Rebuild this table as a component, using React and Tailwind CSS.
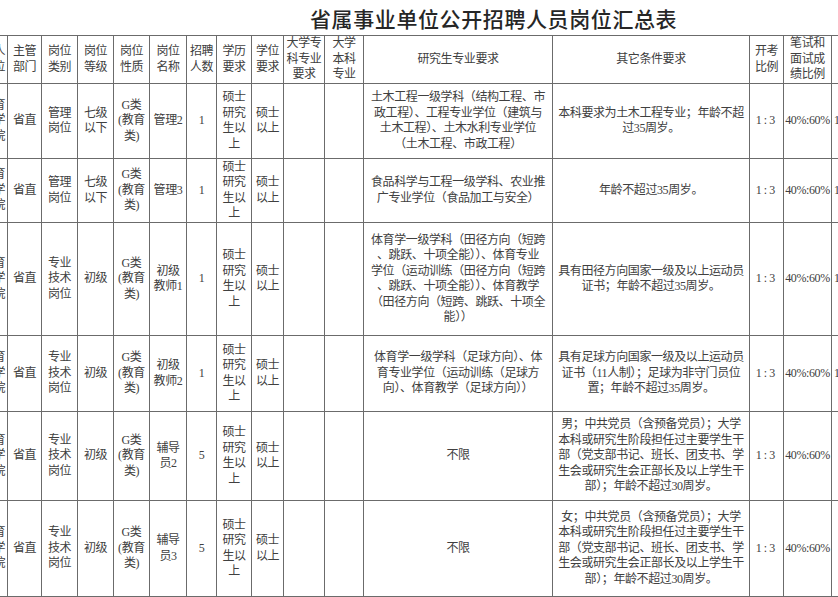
const HEAD = [
  '用人|单位', '主管|部门', '岗位|类别', '岗位|等级', '岗位|性质', '岗位|名称', '招聘|人数',
  '学历|要求', '学位|要求', '大学专|科专业|要求', '大学|本科|专业', '研究生专业要求',
  '其它条件要求', '开考|比例', '笔试和|面试成|绩比例', '备注',
]

const ROWS = [
  {
    h: 'h-[75px]',
    cells: ['省体育|职业学|院', '省直', '管理|岗位', '七级|以下', 'G类|(教育|类)', '管理2', '1', '硕士|研究|生以|上', '硕士|以上', '', '',
      '土木工程一级学科（结构工程、市|政工程）、工程专业学位（建筑与|土木工程）、土木水利专业学位|（土木工程、市政工程）',
      '本科要求为土木工程专业；年龄不超|过35周岁。', '1:3', '40%:60%', '1'],
  },
  {
    h: 'h-[64px]',
    cells: ['省体育|职业学|院', '省直', '管理|岗位', '七级|以下', 'G类|(教育|类)', '管理3', '1', '硕士|研究|生以|上', '硕士|以上', '', '',
      '食品科学与工程一级学科、农业推|广专业学位（食品加工与安全）',
      '年龄不超过35周岁。', '1:3', '40%:60%', '1'],
  },
  {
    h: 'h-[113px]',
    cells: ['省体育|职业学|院', '省直', '专业|技术|岗位', '初级', 'G类|(教育|类)', '初级|教师1', '1', '硕士|研究|生以|上', '硕士|以上', '', '',
      '体育学一级学科（田径方向（短跨|、跳跃、十项全能））、体育专业|学位（运动训练（田径方向（短跨|、跳跃、十项全能））、体育教学|（田径方向（短跨、跳跃、十项全|能））',
      '具有田径方向国家一级及以上运动员|证书；年龄不超过35周岁。', '1:3', '40%:60%', '1'],
  },
  {
    h: 'h-[76px]',
    cells: ['省体育|职业学|院', '省直', '专业|技术|岗位', '初级', 'G类|(教育|类)', '初级|教师2', '1', '硕士|研究|生以|上', '硕士|以上', '', '',
      '体育学一级学科（足球方向）、体|育专业学位（运动训练（足球方|向）、体育教学（足球方向））',
      '具有足球方向国家一级及以上运动员|证书（11人制）；足球为非守门员位|置；年龄不超过35周岁。', '1:3', '40%:60%', '1'],
  },
  {
    h: 'h-[89px]',
    cells: ['省体育|职业学|院', '省直', '专业|技术|岗位', '初级', 'G类|(教育|类)', '辅导|员2', '5', '硕士|研究|生以|上', '硕士|以上', '', '',
      '不限',
      '男；中共党员（含预备党员）；大学|本科或研究生阶段担任过主要学生干|部（党支部书记、班长、团支书、学|生会或研究生会正部长及以上学生干|部）；年龄不超过30周岁。', '1:3', '40%:60%', ''],
  },
  {
    h: 'h-[96px]',
    cells: ['省体育|职业学|院', '省直', '专业|技术|岗位', '初级', 'G类|(教育|类)', '辅导|员3', '5', '硕士|研究|生以|上', '硕士|以上', '', '',
      '不限',
      '女；中共党员（含预备党员）；大学|本科或研究生阶段担任过主要学生干|部（党支部书记、班长、团支书、学|生会或研究生会正部长及以上学生干|部）；年龄不超过30周岁。', '1:3', '40%:60%', ''],
  },
]

const COLS = [
  'w-[40px]', 'w-[34px]', 'w-[36px]', 'w-[36px]', 'w-[36px]', 'w-[37px]', 'w-[30px]', 'w-[35px]',
  'w-[32px]', 'w-[41px]', 'w-[39px]', 'w-[189px]', 'w-[197px]', 'w-[34px]', 'w-[48px]', 'w-[40px]',
]

function Lines({ text }) {
  const parts = text.split('|')
  return parts.map((p, i) => (
    <span key={i}>
      {p}
      {i < parts.length - 1 && <br />}
    </span>
  ))
}

const cellAlign = (i) =>
  i === 0 ? 'text-right pr-[2px]'
    : i === 15 ? 'text-left pl-[2px]'
    : i === 13 ? 'text-center tracking-[2px]'
    : 'text-center'

export default function App() {
  return (
    <div className="w-[838px] h-[597px] overflow-hidden bg-white text-[#404040] font-['Liberation_Serif','Noto_Sans_CJK_SC',serif]">
      {/* 标题 */}
      <div className="h-[35px] pl-[310px] pt-[8px] text-[21px] leading-[24px] font-medium text-[#262626] tracking-[0.6px] whitespace-nowrap">
        省属事业单位公开招聘人员岗位汇总表
      </div>

      <table className="-ml-[33px] w-[904px] table-fixed border-collapse text-[12px] leading-[15.5px] tracking-[-0.4px]">
        <colgroup>
          {COLS.map((c, i) => <col key={i} className={c} />)}
        </colgroup>
        <thead>
          <tr className="h-[48px]">
            {HEAD.map((t, i) => (
              <th
                key={i}
                className={`border border-[#6b6b6b] px-0 font-normal whitespace-nowrap align-middle ${i === 0 ? 'text-right pr-[2px]' : 'text-center'}`}
              >
                <Lines text={t} />
              </th>
            ))}
          </tr>
        </thead>
        <tbody>
          {ROWS.map((r, ri) => (
            <tr key={ri} className={r.h}>
              {r.cells.map((t, i) => (
                <td
                  key={i}
                  className={`border border-[#6b6b6b] px-0 whitespace-nowrap align-middle ${cellAlign(i)}`}
                >
                  <Lines text={t} />
                </td>
              ))}
            </tr>
          ))}
        </tbody>
      </table>
    </div>
  )
}
